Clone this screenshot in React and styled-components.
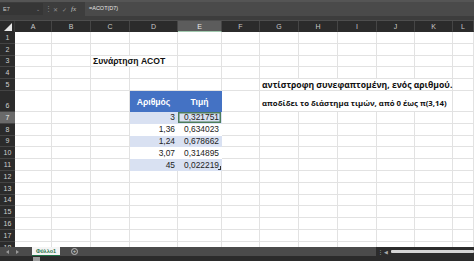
import React from 'react';
import styled, { createGlobalStyle } from 'styled-components';

const GlobalStyle = createGlobalStyle`
  html, body {
    margin: 0;
    padding: 0;
    background: #2b2b2b;
  }
  * { box-sizing: border-box; }
`;

const COLS = ['A', 'B', 'C', 'D', 'E', 'F', 'G', 'H', 'I', 'J', 'K', 'L'];
const COL_WIDTHS = '15px 37px 39px 39px 48px 44px 38px 39px 39px 39px 38px 38px 21px';
const ROWS = Array.from({ length: 18 }, (_, i) => i + 1);

const numbers = [
  ['3', '0,321751'],
  ['1,36', '0,634023'],
  ['1,24', '0,678662'],
  ['3,07', '0,314895'],
  ['45', '0,022219'],
];

// cells that hold something; span = how many columns the text runs over
const cells = {
  C3: { text: 'Συνάρτηση ACOT', kind: 'title', span: 2 },
  G5: { text: 'αντίστροφη συνεφαπτομένη, ενός αριθμού.', kind: 'note', span: 5 },
  G6: { text: 'αποδίδει το διάστημα τιμών, από 0 έως π(3,14)', kind: 'noteSmall', span: 5 },
  D6: { text: 'Αριθμός', kind: 'head' },
  E6: { text: 'Τιμή', kind: 'head' },
};
numbers.forEach(([d, e], i) => {
  const r = 7 + i;
  const band = i % 2 === 0;
  cells[`D${r}`] = { text: d, kind: 'num', band };
  cells[`E${r}`] = { text: e, kind: 'num', band, last: r === 11 };
});

const Page = styled.div`
  width: 474px;
  height: 261px;
  display: flex;
  flex-direction: column;
  overflow: hidden;
  font-family: "Liberation Sans", Arial, sans-serif;
`;

const TopBar = styled.div`
  height: 21px;
  background: #3d3d3d;
  border-top: 2px solid #555;
  border-bottom: 1px solid #4e4e4e;
  display: flex;
  align-items: flex-start;
  padding-top: 1px;
`;

const NameBox = styled.div`
  width: 43px;
  height: 12px;
  background: #363636;
  color: #c8c8c8;
  font-size: 5.5px;
  display: flex;
  align-items: center;
  justify-content: space-between;
  padding: 0 3px;
`;

const Chevron = styled.span`
  font-size: 5px;
  color: #999;
`;

const Dots = styled.span`
  color: #8a8a8a;
  font-size: 7px;
  width: 10px;
  text-align: center;
  line-height: 12px;
`;

const FxButtons = styled.div`
  display: flex;
  gap: 4px;
  align-items: center;
  height: 12px;
  width: 32px;
  color: #8c8c8c;
  font-size: 6px;
`;

const Fx = styled.span`
  font-family: "Liberation Serif", serif;
  font-style: italic;
  color: #c0c0c0;
  font-size: 7px;
`;

const FormulaInput = styled.div`
  flex: 1;
  height: 14px;
  background: #4a4a4a;
  color: #e6e6e6;
  font-size: 5.5px;
  padding: 3px 4px;
  margin-top: -1px;
`;

const Sheet = styled.div`
  flex: 1;
  overflow: hidden;
  background: #fff;
  display: grid;
  grid-template-columns: ${COL_WIDTHS};
  grid-template-rows: 11px repeat(5, 11.8px) 21px repeat(12, 11.8px);
  align-content: start;
`;

const Corner = styled.div`
  background: #2a2a2a;
  border-right: 1px solid #3a3a3a;
  position: relative;
  &::after {
    content: '';
    position: absolute;
    right: 2px;
    bottom: 1px;
    border-left: 8px solid transparent;
    border-bottom: 8px solid #e8e8e8;
  }
`;

const ColHead = styled.div`
  background: ${p => (p.$active ? '#5c5c5c' : '#2b2b2b')};
  color: ${p => (p.$active ? '#e8e8e8' : '#c9c9c9')};
  border-right: 1px solid #454545;
  border-bottom: 1px solid ${p => (p.$active ? '#9fc7ad' : '#2b2b2b')};
  font-size: 7px;
  display: flex;
  align-items: center;
  justify-content: center;
`;

const RowHead = styled.div`
  background: ${p => (p.$active ? '#6a6a6a' : '#2b2b2b')};
  color: ${p => (p.$active ? '#eee' : '#cfcfcf')};
  border-bottom: 1px solid #444;
  font-size: 7px;
  display: flex;
  align-items: flex-end;
  justify-content: center;
  padding-bottom: 2px;
`;

const kindStyles = {
  title: 'font-weight: 700; font-size: 8.6px; color: #111; padding-left: 2px;',
  note: 'font-family: "Open Sans", sans-serif; font-weight: 700; font-size: 8.6px; color: #111; padding-left: 2px; padding-bottom: 0;',
  noteSmall: 'font-family: "Open Sans", sans-serif; font-weight: 700; font-size: 7.8px; color: #111; padding-left: 2px; padding-bottom: 3px;',
  head: 'font-weight: 700; font-size: 8.6px; color: #fff; background: #4472c4; justify-content: center; padding-bottom: 4px; border-right-color: #4472c4; border-bottom-color: #4472c4;',
  num: 'font-size: 8.4px; color: #222; justify-content: flex-end; padding-right: 2px;',
};

const Cell = styled.div`
  grid-column: span ${p => p.$span || 1};
  border-right: 1px solid #e2e2e2;
  border-bottom: 1px solid #e2e2e2;
  display: flex;
  align-items: flex-end;
  padding-bottom: 1px;
  line-height: 1;
  white-space: nowrap;
  position: relative;
  background: ${p => (p.$band ? '#d9e1f2' : 'transparent')};
  ${p => kindStyles[p.$kind] || ''}
  ${p => (p.$band !== undefined ? 'border-right-color: transparent; border-bottom-color: transparent;' : '')}
  ${p => (p.$selected ? 'box-shadow: inset 0 0 0 1.5px #4d7d5d;' : '')}
  ${p =>
    p.$last
      ? `&::after {
          content: '';
          position: absolute;
          right: 0;
          bottom: 0;
          width: 2px;
          height: 3px;
          border-right: 1px solid #333;
          border-bottom: 1px solid #333;
        }`
      : ''}
`;

const TabBar = styled.div`
  height: 9px;
  background: #4b4b4b;
  display: flex;
  align-items: center;
`;

const Arrow = styled.span`
  width: 0;
  height: 0;
  border-top: 2px solid transparent;
  border-bottom: 2px solid transparent;
  ${p => (p.$left ? 'border-right: 3px solid #9a9a9a;' : 'border-left: 3px solid #9a9a9a;')}
  margin-left: ${p => (p.$left ? '6px' : '7px')};
`;

const Tab = styled.div`
  margin-left: 13px;
  width: 28px;
  height: 9px;
  background: #f4f4f4;
  color: #1e7145;
  font-size: 5.5px;
  font-weight: 700;
  display: flex;
  align-items: center;
  justify-content: center;
  border-bottom: 1px solid #1e7145;
`;

const AddSheet = styled.div`
  margin-left: 11px;
  width: 7px;
  height: 7px;
  border-radius: 50%;
  border: 1px solid #bdbdbd;
  color: #d0d0d0;
  font-size: 6px;
  line-height: 5px;
  text-align: center;
`;

const HScroll = styled.div`
  margin-left: auto;
  width: 98px;
  height: 9px;
  background: #2c2c2c;
  display: flex;
  align-items: center;
  color: #aaa;
  font-size: 5px;
`;

const ScrollDots = styled.span`
  width: 8px;
  text-align: center;
`;

const ScrollTrack = styled.div`
  flex: 1;
  height: 3px;
  margin-left: 3px;
  background: #d6d6d6;
  border-radius: 1px;
`;

const StatusBar = styled.div`
  height: 5px;
  background: #2b2b2b;
  padding-left: 33px;
`;

const StatusThumb = styled.div`
  width: 7px;
  height: 4px;
  margin-top: 1px;
  background: #9a9a9a;
`;

function renderRow(r) {
  const out = [
    <RowHead key={`h${r}`} $active={r === 7}>{r}</RowHead>,
  ];
  let skip = 0;
  COLS.forEach(c => {
    if (skip > 0) {
      skip -= 1;
      return;
    }
    const cell = cells[`${c}${r}`];
    if (cell && cell.span) skip = cell.span - 1;
    out.push(
      <Cell
        key={`${c}${r}`}
        $span={cell?.span}
        $kind={cell?.kind}
        $band={cell?.kind === 'num' ? cell.band : undefined}
        $last={cell?.last}
        $selected={c === 'E' && r === 7}
      >
        {cell?.text}
      </Cell>
    );
  });
  return out;
}

const App = () => {
  return (
    <Page>
      <GlobalStyle />
      <TopBar>
        <NameBox>
          <span>E7</span>
          <Chevron>⌄</Chevron>
        </NameBox>
        <Dots>⋮</Dots>
        <FxButtons>
          <span>✕</span>
          <span>✓</span>
          <Fx>fx</Fx>
        </FxButtons>
        <FormulaInput>=ACOT(D7)</FormulaInput>
      </TopBar>

      <Sheet>
        <Corner />
        {COLS.map(c => (
          <ColHead key={c} $active={c === 'E'}>{c}</ColHead>
        ))}
        {ROWS.map(r => renderRow(r))}
      </Sheet>

      <TabBar>
        <Arrow $left />
        <Arrow />
        <Tab>Φύλλο1</Tab>
        <AddSheet>+</AddSheet>
        <HScroll>
          <ScrollDots>⋮</ScrollDots>
          <span>◀</span>
          <ScrollTrack />
        </HScroll>
      </TabBar>
      <StatusBar>
        <StatusThumb />
      </StatusBar>
    </Page>
  );
};

export default App;
